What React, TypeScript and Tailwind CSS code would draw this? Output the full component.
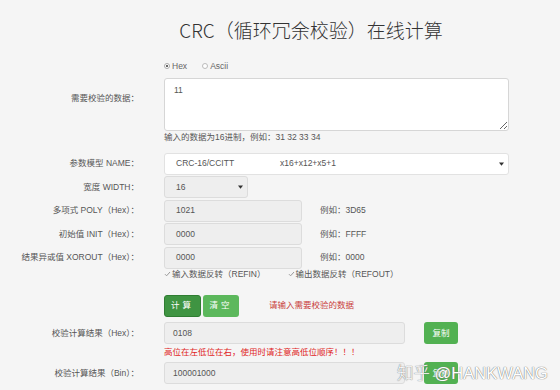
import type { ReactNode } from "react";

const font = "font-['Liberation_Sans','Noto_Sans_CJK_SC',sans-serif]";
const labelCls = "w-[139px] shrink-0 text-right text-[8.5px] text-[#555]";
const boxCls =
  "flex h-[22px] items-center rounded-[3px] border border-[#dcdcdc] bg-[#eeeeee] text-[8.5px] text-[#555]";

function Caret() {
  return (
    <svg width="5" height="4" viewBox="0 0 5 4" className="ml-auto">
      <path d="M0 0.5h5L2.5 3.8z" fill="#333" />
    </svg>
  );
}

function Check() {
  return (
    <svg width="7" height="6" viewBox="0 0 7 6" className="mr-[1px]">
      <path d="M1 3.2l1.6 1.6L6 1" fill="none" stroke="#999" strokeWidth="1" />
    </svg>
  );
}

function Row({ label, children, className = "" }: { label?: string; children: ReactNode; className?: string }) {
  return (
    <div className={`flex items-center ${className}`}>
      <div className={labelCls}>{label}</div>
      <div className="ml-[25px] flex items-center">{children}</div>
    </div>
  );
}

export default function App() {
  return (
    <div className={`relative h-[390px] overflow-hidden bg-[#f5f5f5] ${font}`}>
      <h1 className="h-[42px] pl-[62px] pt-[18px] text-center font-['Noto_Sans_CJK_SC',sans-serif] text-[19px] font-light leading-[24px] text-[#333]">
        CRC（循环冗余校验）在线计算
      </h1>

      <div className="ml-[164px] mt-[17px] flex h-[14px] items-center text-[8.5px] text-[#666]">
        <span className="mr-[2px] flex h-[6px] w-[6px] items-center justify-center rounded-full border border-[#aaa] bg-white">
          <span className="h-[2px] w-[2px] rounded-full bg-[#333]" />
        </span>
        <span>Hex</span>
        <span className="ml-[15px] mr-[2px] h-[6px] w-[6px] rounded-full border border-[#bbb] bg-white" />
        <span>Ascii</span>
      </div>

      <div className="mt-[5px] flex items-start">
        <div className={`${labelCls} pt-[14px] leading-[12px]`}>需要校验的数据：</div>
        <div className="ml-[25px]">
          <textarea
            defaultValue="11"
            className="block h-[53px] w-[345px] rounded-[3px] border border-[#d6d6d6] bg-white pl-[9px] pt-[5px] text-[8.5px] text-[#555] outline-none"
          />
          <div className="h-[12px] text-[8.5px] leading-[12px] text-[#555]">
            输入的数据为16进制，例如：31 32 33 34
          </div>
        </div>
      </div>

      <Row label="参数模型 NAME：" className="mt-[9.5px]">
        <div className="flex h-[22px] w-[345px] items-center rounded-[3px] border border-[#e2e2e2] bg-white pl-[11px] pr-[4px] text-[8.5px] text-[#555]">
          <span className="w-[104px]">CRC-16/CCITT</span>
          <span>x16+x12+x5+1</span>
          <Caret />
        </div>
      </Row>

      <Row label="宽度 WIDTH：" className="mt-[1.5px]">
        <div className={`${boxCls} w-[84px] pl-[11px] pr-[4px]`}>
          <span>16</span>
          <Caret />
        </div>
      </Row>

      <Row label="多项式 POLY（Hex）：" className="mt-[1.5px]">
        <div className={`${boxCls} w-[138px] pl-[11px]`}>1021</div>
        <span className="ml-[18px] text-[8.5px] text-[#555]">例如：3D65</span>
      </Row>

      <Row label="初始值 INIT（Hex）：" className="mt-[1.5px]">
        <div className={`${boxCls} w-[138px] pl-[11px]`}>0000</div>
        <span className="ml-[18px] text-[8.5px] text-[#555]">例如：FFFF</span>
      </Row>

      <Row label="结果异或值 XOROUT（Hex）：" className="mt-[1.5px]">
        <div className={`${boxCls} w-[138px] pl-[11px]`}>0000</div>
        <span className="ml-[18px] text-[8.5px] text-[#555]">例如：0000</span>
      </Row>

      <div className="ml-[164px] flex h-[10px] items-center text-[8.5px] leading-[10px] text-[#555]">
        <Check />
        <span>输入数据反转（REFIN）</span>
        <span className="ml-[22px]" />
        <Check />
        <span>输出数据反转（REFOUT）</span>
      </div>

      <Row className="mt-[16px]">
        <button className="h-[22px] w-[37px] rounded-[3px] border border-[#2f7d32] bg-[#3f9442] text-[8.5px] tracking-[3px] text-white">
          计算
        </button>
        <button className="ml-[2px] h-[22px] w-[36px] rounded-[3px] bg-[#5cb85c] text-[8.5px] tracking-[3px] text-white">
          清空
        </button>
        <span className="ml-[30px] text-[8.5px] text-[#c9403c]">请输入需要校验的数据</span>
      </Row>

      <Row label="校验计算结果（Hex）：" className="mt-[5.5px]">
        <div className={`${boxCls} w-[241px] pl-[8px]`}>0108</div>
        <button className="ml-[19px] h-[22px] w-[34px] rounded-[3px] bg-[#52b152] text-[8.5px] text-white">
          复制
        </button>
      </Row>

      <div className="ml-[164px] h-[18px] text-[8.5px] leading-[16px] text-[#e02424]">
        高位在左低位在右，使用时请注意高低位顺序！！！
      </div>

      <Row label="校验计算结果（Bin）：">
        <div className={`${boxCls} w-[241px] pl-[8px]`}>100001000</div>
        <button className="ml-[19px] h-[22px] w-[34px] rounded-[3px] bg-[#52b152] text-[8.5px] text-white">
          复制
        </button>
      </Row>

      <div className="absolute left-[397px] top-[362px] text-[16.5px] font-light leading-[22px] text-white [text-shadow:0_0_1px_#7a7a7a,0_0_1px_#7a7a7a]">
        知乎 @HANKWANG
      </div>
    </div>
  );
}
